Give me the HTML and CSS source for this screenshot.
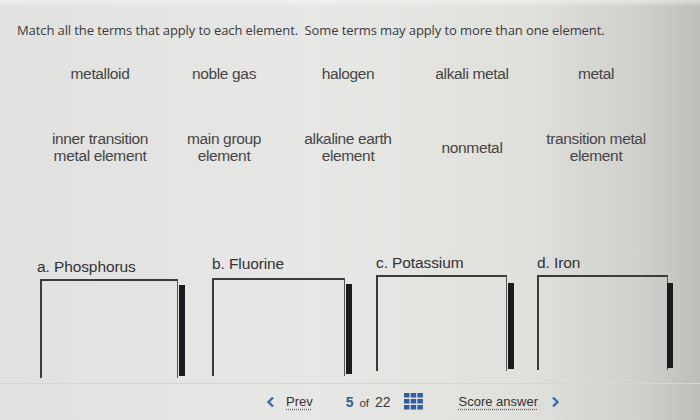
FILE: index.html
```html
<!DOCTYPE html>
<html>
<head>
<meta charset="utf-8">
<link rel="stylesheet" href="styles.css">
</head>
<body>
<div class="page">
  <p class="prompt">Match all the terms that apply to each element.&nbsp; Some terms may apply to more than one element.</p>
  <div class="terms row1">
    <div class="term">metalloid</div>
    <div class="term">noble gas</div>
    <div class="term">halogen</div>
    <div class="term">alkali metal</div>
    <div class="term">metal</div>
  </div>
  <div class="terms row2">
    <div class="term">inner transition<br>metal element</div>
    <div class="term">main group<br>element</div>
    <div class="term">alkaline earth<br>element</div>
    <div class="term">nonmetal</div>
    <div class="term">transition metal<br>element</div>
  </div>
  <div class="targets">
    <div class="target t-a">
      <div class="label">a. Phosphorus</div>
      <div class="box"></div>
    </div>
    <div class="target t-b">
      <div class="label">b. Fluorine</div>
      <div class="box"></div>
    </div>
    <div class="target t-c">
      <div class="label">c. Potassium</div>
      <div class="box"></div>
    </div>
    <div class="target t-d">
      <div class="label">d. Iron</div>
      <div class="box"></div>
    </div>
  </div>
  <div class="footer">
    <div class="nav">
      <span class="chev">
        <svg width="9" height="12" viewBox="0 0 9 12"><path d="M7 1.5 L2.5 6 L7 10.5" fill="none" stroke="#2f6fb6" stroke-width="2.4"/></svg>
      </span>
      <span class="link prev">Prev</span>
    </div>
    <div class="count"><b>5</b> <span class="of">of</span> 22</div>
    <div class="grid-icon">
      <svg width="19" height="17" viewBox="0 0 19 17">
        <g fill="#2f5f9e">
          <rect x="0" y="0" width="5.5" height="4.5"/><rect x="6.7" y="0" width="5.5" height="4.5"/><rect x="13.4" y="0" width="5.5" height="4.5"/>
          <rect x="0" y="6" width="5.5" height="4.5"/><rect x="6.7" y="6" width="5.5" height="4.5"/><rect x="13.4" y="6" width="5.5" height="4.5"/>
          <rect x="0" y="12" width="5.5" height="4.5"/><rect x="6.7" y="12" width="5.5" height="4.5"/><rect x="13.4" y="12" width="5.5" height="4.5"/>
        </g>
      </svg>
    </div>
    <div class="nav score">
      <span class="link">Score answer</span>
      <span class="chev">
        <svg width="9" height="12" viewBox="0 0 9 12"><path d="M2 1.5 L6.5 6 L2 10.5" fill="none" stroke="#2f6fb6" stroke-width="2.4"/></svg>
      </span>
    </div>
  </div>
</div>
</body>
</html>
```
FILE: styles.css
```css
html, body {
  margin: 0;
  padding: 0;
}
body {
  width: 700px;
  height: 420px;
  overflow: hidden;
  background: linear-gradient(to right, #e1e1df 0%, #e7e7e5 45%, #e0e0dd 75%, #cfcfcc 92%, #bdbdb9 100%);
  font-family: "Liberation Sans", Arial, sans-serif;
  color: #3d3d3d;
}
.page {
  width: 700px;
  height: 420px;
  display: flex;
  flex-direction: column;
  background: linear-gradient(to bottom, rgba(255,255,255,0.45) 0px, rgba(255,255,255,0) 7px);
}
.prompt {
  margin: 22px 0 0 17px;
  font-family: "Open Sans", "Lato", sans-serif;
  font-size: 13px;
  color: #3a3a3a;
  line-height: 16px;
  letter-spacing: -0.1px;
}
.terms {
  display: grid;
  grid-template-columns: repeat(5, 124px);
  margin-left: 38px;
  font-size: 15.5px;
  line-height: 17px;
  color: #454545;
  text-align: center;
  letter-spacing: -0.35px;
}
.row1 {
  margin-top: 27px;
}
.row2 {
  margin-top: 48px;
  align-items: center;
}
.targets {
  display: grid;
  grid-template-columns: 175px 164px 161px 140px;
  margin-left: 37px;
  margin-top: 80px;
  align-items: start;
}
.label {
  font-size: 15.5px;
  color: #333;
  line-height: 17px;
  letter-spacing: -0.1px;
}
.box {
  position: relative;
  border-top: 2px solid #3b3b3b;
  border-left: 2px solid #3b3b3b;
  border-right: 1.5px solid #555;
}
.box::after {
  content: "";
  position: absolute;
  right: -8px;
  top: 4px;
  width: 6px;
  bottom: 2px;
  background: #1b1b1d;
}
.t-a { padding-top: 14px; }
.t-a .box { width: 134.5px; height: 97px; margin-top: 3.5px; margin-left: 3px; }
.t-b { padding-top: 11px; }
.t-b .box { width: 129.5px; height: 96px; margin-top: 5.5px; margin-left: 0; }
.t-c { padding-top: 10px; }
.t-c .box { width: 127.5px; height: 94px; margin-top: 3.5px; margin-left: 0; }
.t-c .box::after { bottom: 2px; top: 6px; }
.t-d { padding-top: 10px; }
.t-d .box { width: 127.5px; height: 93px; margin-top: 3.5px; margin-left: 0; }
.t-d .box::after { right: -6px; bottom: 2px; top: 6px; }
.footer {
  margin-top: 5px;
  border-top: 1px solid #d6d6d4;
  height: 36px;
  display: flex;
  align-items: center;
  padding-left: 266px;
  font-size: 13px;
  color: #333;
}
.nav {
  display: flex;
  align-items: center;
}
.chev {
  display: flex;
  align-items: center;
}
.link {
  text-decoration: underline dotted #666;
  text-underline-offset: 3px;
}
.prev {
  margin-left: 11px;
}
.count {
  margin-left: 33px;
  font-size: 14px;
  color: #3a3a3a;
}
.count b {
  color: #2f5f9e;
}
.count .of {
  font-size: 11.5px;
  margin: 0 2px;
}
.grid-icon {
  margin-left: 14px;
  display: flex;
  align-items: center;
}
.score {
  margin-left: 35px;
}
.score .chev {
  margin-left: 13px;
}
```
